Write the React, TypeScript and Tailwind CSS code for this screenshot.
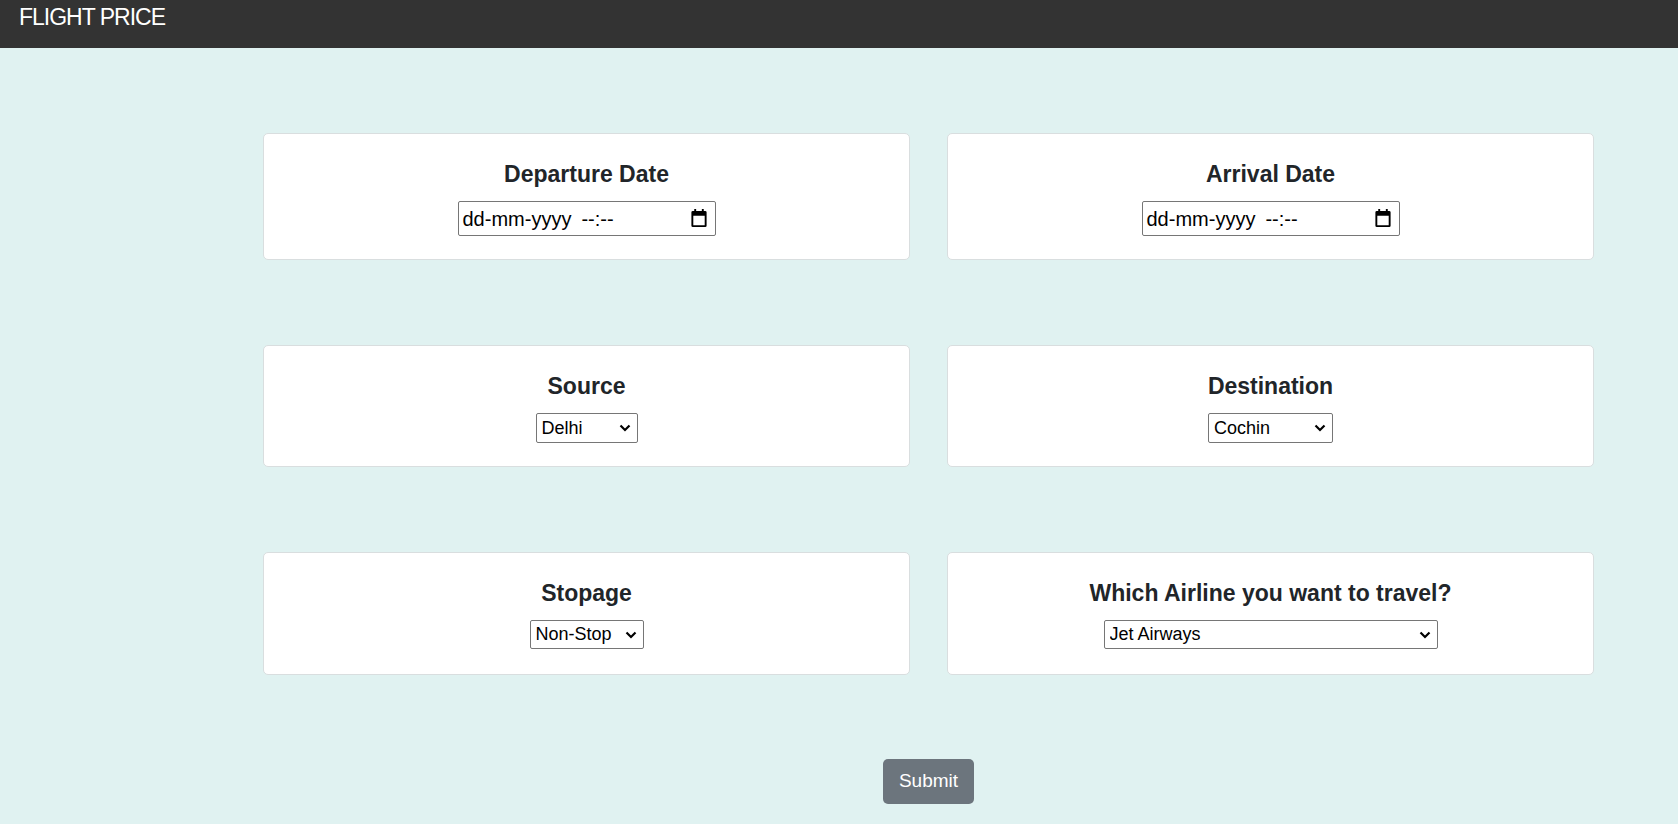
import React from "react";

const cities = ["Delhi", "Kolkata", "Mumbai", "Chennai", "Banglore"];
const destinations = ["Cochin", "Delhi", "New Delhi", "Hyderabad", "Kolkata", "Banglore"];
const stops = ["Non-Stop", "1 Stop", "2 Stops", "3 Stops", "4 Stops"];
const airlines = [
  "Jet Airways",
  "IndiGo",
  "Air India",
  "Multiple carriers",
  "SpiceJet",
  "Vistara",
  "Air Asia",
  "GoAir",
  "Multiple carriers Premium economy",
  "Jet Airways Business",
  "Vistara Premium economy",
  "Trujet",
];

function Chevron() {
  return (
    <svg
      viewBox="0 0 12 8"
      className="pointer-events-none absolute right-[7px] top-1/2 h-[8px] w-[12px] -translate-y-1/2 text-black"
      aria-hidden="true"
    >
      <polyline points="1.5,1.5 6,6 10.5,1.5" fill="none" stroke="currentColor" strokeWidth="2.2" />
    </svg>
  );
}

function CalendarIcon() {
  return (
    <svg viewBox="0 0 18 20" className="h-[19px] w-[18px] text-black" aria-hidden="true">
      <path
        fill="currentColor"
        d="M4 0v2H2.5A1.5 1.5 0 0 0 1 3.5v14A1.5 1.5 0 0 0 2.5 19h13a1.5 1.5 0 0 0 1.5-1.5v-14A1.5 1.5 0 0 0 15.5 2H14V0h-2v2H6V0zM3 7h12v10H3z"
      />
    </svg>
  );
}

function DateField(props: { label: string }) {
  return (
    <div
      aria-label={props.label}
      className="mt-[13px] flex h-[35px] w-[258px] items-center rounded-[2px] border border-[#767676] bg-white pl-[4px] pr-[7px] text-[20px] text-black"
    >
      <span>dd-mm-yyyy</span>
      <span className="ml-[10px]">--:--</span>
      <span className="ml-auto flex">
        <CalendarIcon />
      </span>
    </div>
  );
}

function SelectField(props: { options: string[]; width: string; height: string }) {
  return (
    <div className={`relative mt-[13px] ${props.width} ${props.height}`}>
      <select className="h-full w-full appearance-none rounded-[2px] border border-[#767676] bg-white pl-[5px] text-[18px] text-black outline-none">
        {props.options.map((o) => (
          <option key={o}>{o}</option>
        ))}
      </select>
      <Chevron />
    </div>
  );
}

function Card(props: { title: string; bottom?: string; children: React.ReactNode }) {
  return (
    <div
      className={`flex flex-col items-center rounded-[5px] border border-[#d9dedf] bg-white pt-[26px] ${
        props.bottom ?? "pb-[23px]"
      }`}
    >
      <h5 className="text-[23px] font-bold leading-[28px] text-[#212529]">{props.title}</h5>
      {props.children}
    </div>
  );
}

export default function App() {
  return (
    <div className="min-h-screen bg-[#e0f2f1] font-['Liberation_Sans',Arial,sans-serif]">
      <nav className="h-[48px] bg-[#333333] pl-[19px] pt-[4px]">
        <span className="text-[23px] leading-[27px] tracking-[-1px] text-white">FLIGHT PRICE</span>
      </nav>

      <main className="pb-[20px] pl-[263px] pr-[84px] pt-[85px]">
        <form className="flex flex-col gap-y-[84px]" onSubmit={(e) => e.preventDefault()}>
          <div className="grid grid-cols-2 gap-x-[37px] gap-y-[85px]">
            <Card title="Departure Date">
              <DateField label="Departure Date" />
            </Card>
            <Card title="Arrival Date">
              <DateField label="Arrival Date" />
            </Card>

            <Card title="Source">
              <SelectField options={cities} width="w-[102px]" height="h-[30px]" />
            </Card>
            <Card title="Destination">
              <SelectField options={destinations} width="w-[125px]" height="h-[30px]" />
            </Card>

            <Card title="Stopage" bottom="pb-[25px]">
              <SelectField options={stops} width="w-[114px]" height="h-[29px]" />
            </Card>
            <Card title="Which Airline you want to travel?" bottom="pb-[25px]">
              <SelectField options={airlines} width="w-[334px]" height="h-[29px]" />
            </Card>
          </div>

          <div className="flex justify-center">
            <button
              type="submit"
              className="h-[45px] w-[91px] rounded-[5px] bg-[#6c757d] text-[19px] text-white"
            >
              Submit
            </button>
          </div>
        </form>
      </main>
    </div>
  );
}
